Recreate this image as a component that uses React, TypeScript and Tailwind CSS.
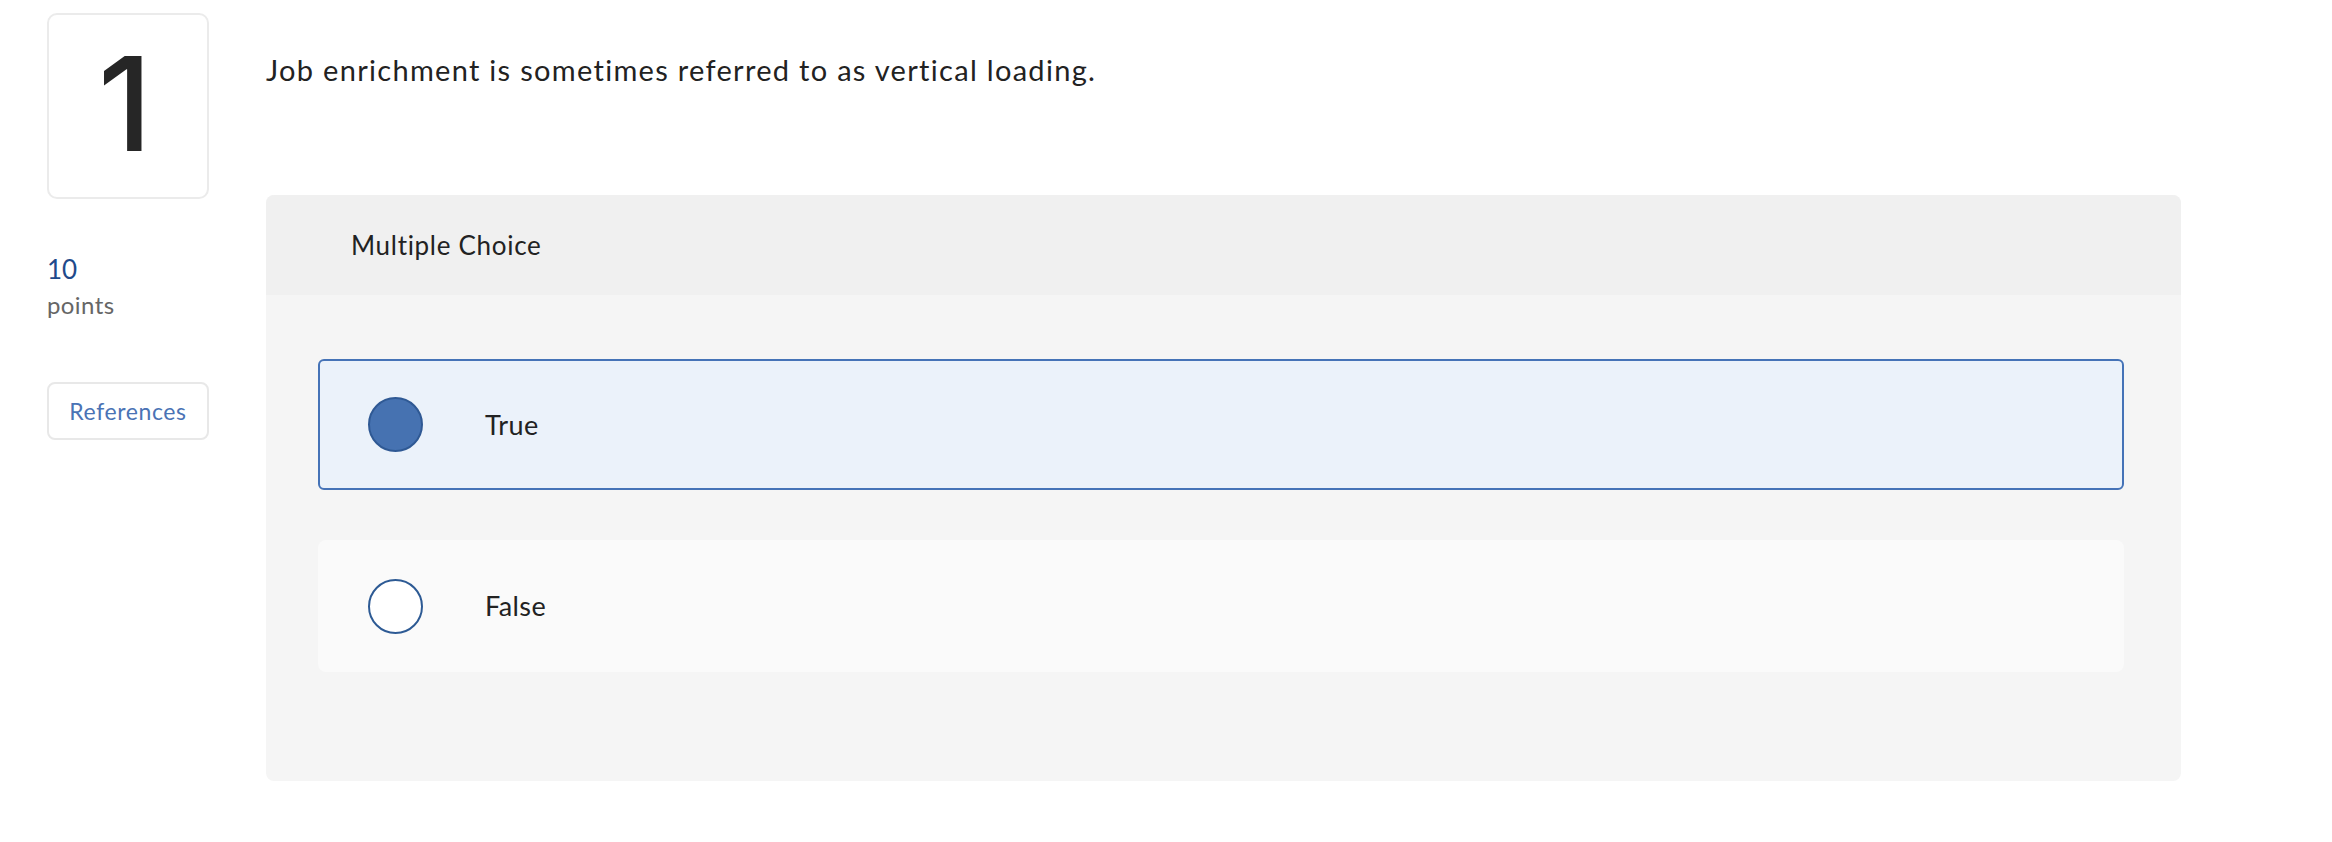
import React from "react";

function Radio({ checked }: { checked: boolean }) {
  return (
    <div
      className={
        checked
          ? "w-[55px] h-[55px] shrink-0 rounded-full bg-[#4672b1] border-2 border-[#2f5994]"
          : "w-[55px] h-[55px] shrink-0 rounded-full bg-white border-[2.5px] border-[#2d5a94]"
      }
    />
  );
}

function Option({ label, checked }: { label: string; checked: boolean }) {
  return (
    <div
      className={
        checked
          ? "flex items-center h-[131px] pl-[48px] rounded-[6px] border-2 border-[#4573b7] bg-[#ebf2fa]"
          : "flex items-center h-[132px] pl-[50px] rounded-[8px] bg-[#fafafa]"
      }
    >
      <Radio checked={checked} />
      <span className="ml-[62px] text-[27px] leading-[32px] tracking-[0.4px] text-[#222222]">{label}</span>
    </div>
  );
}

export default function App() {
  return (
    <div
      className="min-h-screen bg-white flex pt-[13px] pl-[47px]"
      style={{ fontFamily: "Lato, 'Open Sans', sans-serif" }}
    >
      <div className="w-[162px] shrink-0 flex flex-col">
        <div className="h-[186px] rounded-[10px] border-2 border-[#ebebeb] flex items-center justify-center">
          <span
            className="text-[130px] leading-none font-medium text-[#262626] -ml-[6px] -mt-[4px]"
            style={{ fontFamily: "Inter, 'Open Sans', sans-serif" }}
          >
            1
          </span>
        </div>
        <div className="mt-[54px] text-[26px] leading-[32px] text-[#1f4a8b]">10</div>
        <div className="mt-[4px] text-[24px] leading-[32px] tracking-[0.4px] text-[#666666]">points</div>
        <button className="mt-[61px] h-[58px] rounded-[8px] border-2 border-[#e8e8e8] bg-white text-[23px] tracking-[0.6px] text-[#4a73b5]">
          References
        </button>
      </div>
      <div className="ml-[57px] w-[1915px] shrink-0 flex flex-col">
        <div className="mt-[39px] text-[29px] leading-[36px] tracking-[1.3px] text-[#222222]">
          Job enrichment is sometimes referred to as vertical loading.
        </div>
        <div className="mt-[107px] rounded-[8px] bg-[#f5f5f5] overflow-hidden">
          <div className="h-[100px] bg-[#f0f0f0] flex items-center pl-[85px]">
            <span className="text-[26px] leading-[32px] tracking-[0.7px] text-[#222222]">Multiple Choice</span>
          </div>
          <div className="pt-[64px] pb-[109px] pl-[52px] pr-[57px] flex flex-col gap-[50px]">
            <Option label="True" checked={true} />
            <Option label="False" checked={false} />
          </div>
        </div>
      </div>
    </div>
  );
}
